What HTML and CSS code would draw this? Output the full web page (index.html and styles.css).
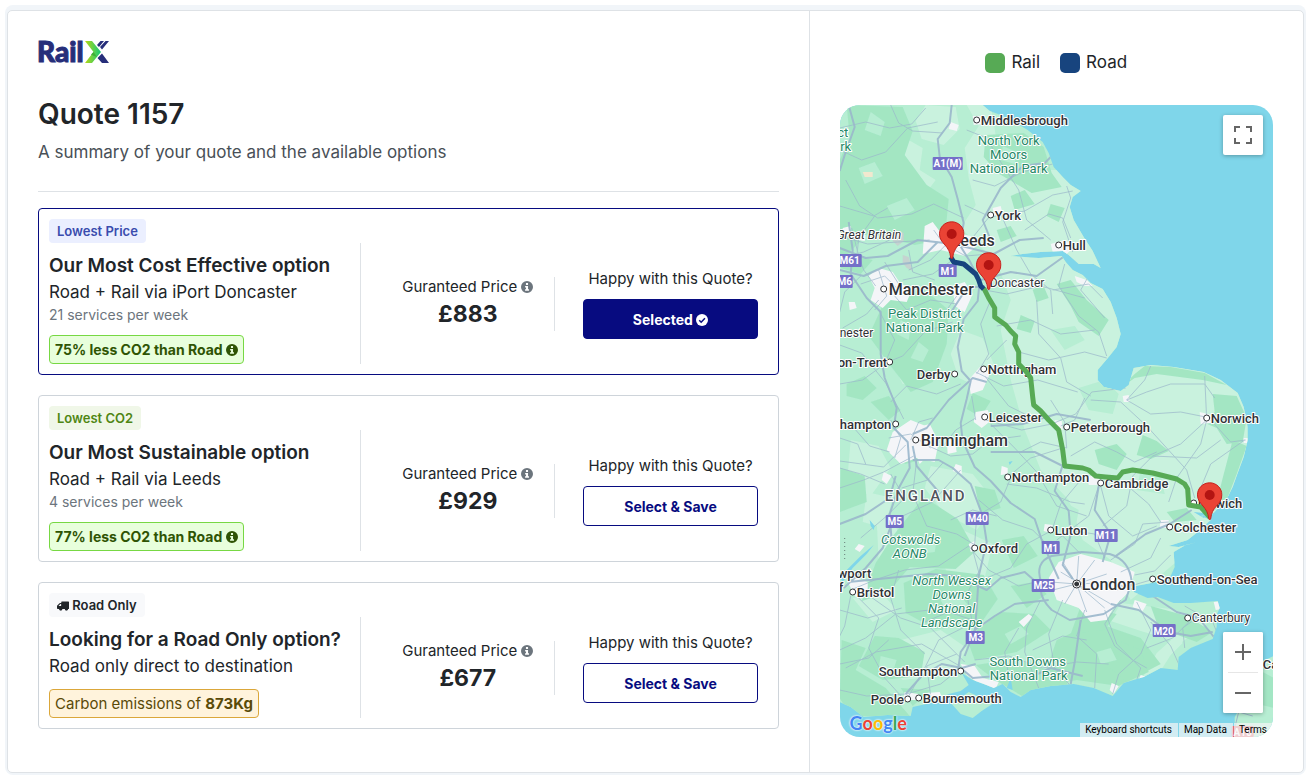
FILE: index.html
```html
<!DOCTYPE html>
<html lang="en">

<head>
    <meta charset="UTF-8">
    <meta name="viewport" content="width=device-width, initial-scale=1.0">
    <title>RailX - Quote 1157</title>
    <link rel="stylesheet" href="styles.css">
</head>

<body>
    <!-- shared icons -->
    <svg class="sprite" aria-hidden="true">
        <symbol id="info" viewBox="0 0 16 16">
            <path fill="currentColor" fill-rule="evenodd" d="M8 0a8 8 0 1 0 0 16A8 8 0 0 0 8 0zM6.6 2.7h2.8v2.6H6.6zM5.5 6.5h3.9v4.6h1.3v2H5.4v-2h1.3V8.5H5.5z" />
        </symbol>
        <symbol id="check" viewBox="0 0 16 16">
            <circle cx="8" cy="8" r="8" fill="#fff" />
            <path d="M4.3 8.3l2.6 2.6 5-5.2" fill="none" stroke="#070b80" stroke-width="2" />
        </symbol>
        <symbol id="truck" viewBox="0 0 16 14">
            <path fill="currentColor" fill-rule="evenodd" d="M6.5 1h8.7q.8 0 .8.8v8.4q0 .8-.8.8h-.5a2.2 2.2 0 0 1-4.3 0H7.2a2.2 2.2 0 0 1-4.3 0H1q-1 0-1-1V6.8l3-3.3q.4-.5 1-.5h1.7V1.800q0-.8.8-.8zM4.400 4.300L2 7h3.500V4.300z" />
            <circle cx="5" cy="11" r="2" fill="currentColor" />
            <circle cx="12.500" cy="11" r="2" fill="currentColor" />
        </symbol>
        <symbol id="pin" viewBox="0 0 26 38">
            <path d="M13 .8C6.200.8.8 6.200.8 12.800c0 5 2.500 7.800 5.500 11.200 3 3.500 5.200 7 5.600 12.200 0 .9.400 1.300 1.100 1.300s1.100-.4 1.100-1.300c.4-5.200 2.600-8.700 5.600-12.200 3-3.400 5.500-6.200 5.500-11.200C25.200 6.200 19.800.8 13 .8z" fill="#ea4335" stroke="#c5221f" />
            <circle cx="13" cy="13" r="5" fill="#b31412" />
        </symbol>
    </svg>

    <div class="outer">
        <div class="panel">
            <main class="quotes">
                <a href="#" class="logo" aria-label="RailX">
                    <svg width="72" height="24" viewBox="0 0 72 24">
                        <defs>
                            <linearGradient id="green" x1="0" x2="1">
                                <stop offset="0" stop-color="#b5d916" />
                                <stop offset="1" stop-color="#12c97b" />
                            </linearGradient>
                        </defs>
                        <text class="logoText" x="-1" y="22">Rail</text>
                        <path fill="url(#green)" d="M47 1h7l9 11-9 11h-7l8.500-11z" />
                        <path fill="#3fae38" d="M55.500 12l3.500 5-4-1.500-2-1z" />
                        <path fill="#262e7a" d="M62.500 1H66l-5 6-2-2zM67.500 1H71l-7 8.500-2-2.500zM64 13.500L71 23h-7l-4.500-5z" />
                    </svg>
                </a>
                <h1>Quote 1157</h1>
                <p class="summary">A summary of your quote and the available options</p>

                <section class="option selected">
                    <span class="badge price">Lowest Price</span>
                    <div class="optionRow">
                        <div class="details">
                            <h2>Our Most Cost Effective option</h2>
                            <p class="route">Road + Rail via iPort Doncaster</p>
                            <p class="services">21 services per week</p>
                            <span class="tag saving">75% less CO2 than Road <svg class="icon"><use href="#info" /></svg></span>
                        </div>
                        <div class="cost">
                            <p class="costLabel">Guranteed Price <svg class="icon"><use href="#info" /></svg></p>
                            <p class="amount">£883</p>
                        </div>
                        <div class="choose">
                            <p>Happy with this Quote?</p>
                            <button type="button">Selected <svg class="icon"><use href="#check" /></svg></button>
                        </div>
                    </div>
                </section>

                <section class="option">
                    <span class="badge co2">Lowest CO2</span>
                    <div class="optionRow">
                        <div class="details">
                            <h2>Our Most Sustainable option</h2>
                            <p class="route">Road + Rail via Leeds</p>
                            <p class="services">4 services per week</p>
                            <span class="tag saving">77% less CO2 than Road <svg class="icon"><use href="#info" /></svg></span>
                        </div>
                        <div class="cost">
                            <p class="costLabel">Guranteed Price <svg class="icon"><use href="#info" /></svg></p>
                            <p class="amount">£929</p>
                        </div>
                        <div class="choose">
                            <p>Happy with this Quote?</p>
                            <button type="button">Select &amp; Save</button>
                        </div>
                    </div>
                </section>

                <section class="option">
                    <span class="badge road"><svg class="icon"><use href="#truck" /></svg> Road Only</span>
                    <div class="optionRow">
                        <div class="details">
                            <h2>Looking for a Road Only option?</h2>
                            <p class="route">Road only direct to destination</p>
                            <span class="tag emissions">Carbon emissions of <b>873Kg</b></span>
                        </div>
                        <div class="cost">
                            <p class="costLabel">Guranteed Price <svg class="icon"><use href="#info" /></svg></p>
                            <p class="amount">£677</p>
                        </div>
                        <div class="choose">
                            <p>Happy with this Quote?</p>
                            <button type="button">Select &amp; Save</button>
                        </div>
                    </div>
                </section>
            </main>

            <aside class="mapSide">
                <ul class="legend">
                    <li><span class="swatch rail"></span>Rail</li>
                    <li><span class="swatch road"></span>Road</li>
                </ul>
                <div class="map">
                    <svg class="mapCanvas" viewBox="839 105 434 632" preserveAspectRatio="xMidYMid slice" role="img" aria-label="Map of the route">
                        <!-- land -->
                        <g fill="#b7eed3">
                            <path id="land" d="M839 105H982L989 111 1000 115 1012 121 1027 130 1042 142 1048 153 1053 167 1062 177 1070 185 1080 191 1072 197 1069 207 1073 220 1083 237 1092 251 1100 268 1093 264 1078 264 1068 255 1062 251 1040 252 1022 254 1010 256 1024 257 1038 258 1061 256 1065 262 1072 270 1082 275 1090 283 1102 289 1110 302 1116 318 1120 334 1116 347 1108 357 1097 370 1097 380 1103 387 1120 391 1128 385 1133 368 1150 365 1173 367 1203 372 1220 380 1237 393 1243 407 1247 427 1247 440 1243 457 1237 473 1232 487 1227 497 1213 513 1200 516 1210 520 1197 532 1187 540 1168 546 1178 547 1197 542 1185 545 1173 552 1174 567 1170 576 1156 582 1135 586 1133 592 1147 598 1157 597 1173 603 1190 603 1217 601 1219 608 1216 615 1216 627 1212 639 1190 648 1178 657 1177 670 1160 668 1143 677 1123 683 1112 696 1093 688 1073 684 1050 686 1030 690 1020 697 1010 692 1002 684 993 688 983 684 972 680 961 673 968 685 960 691 948 694 930 703 912 707 910 716 887 715 863 717 850 707 839 702z" />
                            <path d="M951 704L968 692 985 700 993 703 981 711 972 718 960 714z" />
                            <path d="M1273 656L1258 663 1250 690 1234 717 1234 737H1273z" />
                        </g>
                        <clipPath id="landClip"><use href="#land" /></clipPath>

                        <g clip-path="url(#landClip)">
                            <!-- lowlands -->
                            <g fill="#c9f2de">
                                <path d="M966 105L978 126 964 148 968 178 975 205 960 228 996 262 1010 300 1000 330 1010 380 1024 430 1040 470 1068 500 1082 540 1110 560 1130 600 1250 500 1260 380 1120 330 1120 240 1070 170 1040 170 1000 165 990 105z" />
                                <path d="M925 105l30 2 4 22-16 16-22-6-6-18zM908 140l14 8-3 22 16 10-12 16-13-14-8-22zM960 330l22 8 12 28-14 22-22-10-8-24zM912 344l24 10-4 26-30 4-10-20zM850 440l28 6 12 22-20 28-24-10zM930 466l42 8 24 30-20 26-32-16-20-26zM866 492l26 6-8 30-22-6zM962 530l30 14-8 34-34 4-12-30zM900 640l40-10 26 18-12 26-52 6-24-20zM1120 603l50 6 40 12-30 22-40-12-30-10zM876 520l20 8 4 28-22 6zM852 598l30-4 14 16-24 12z" />
                                <path d="M1170 655l12-12-6-8-20 18-16 28 16-4z" />
                            </g>
                            <!-- forests, hills and parks -->
                            <g fill="#a3e6c4">
                                <path d="M846 105l56 2 10 24-8 24 22 30 22 14-4 40-30 6-46-12-24 24H839V160l10-22z" />
                                <path d="M985 135l38-2 20 14 8 26 10 14-30 6-34-20-14-16z" />
                                <path d="M888 292l36-2 24 20-2 34-14 38-22 10-20-26-22-30z" />
                                <path d="M893 535l30-38 34 22 18 32-20 18-46-2-22 26-26 8 14-38z" />
                                <path d="M903 583l32-14 48 6 14 24-18 26-44 4-30-16z" />
                                <path d="M1000 612l34 2 16 16-34 22-42 8-8-22z" />
                                <path d="M1056 640l38-18 46 16 20 26-42 22-42-6-36 6z" />
                                <path d="M975 665l40-6 50 18 4 16-46 4-30-18z" />
                                <path d="M874 636l24 2 26 14-4 24-38 4-24-14z" />
                                <path d="M840 468l24 8 2 26-27 10zM841 640l24 8-10 22 30 18 24 28H850l-11-18zM900 688l30 2-18 16zM870 402l18-6 12 14-12 10zM972 393l18 8-10 16-14-8zM846 384l18-8 12 12-14 12-16-4zM900 448l22-4 6 14-24 6zM974 486l20 4 6 18-20 6zM1001 540l22-4 14 20-24 12zM1010 586l24-4 12 12-20 14zM1080 606l36 8-12 16-34 4zM848 254l24 6-12 14-20-6z" />
                                <path d="M1120 388l14-14 10-8 26 1 34 6 22 12-24-5-46-6-22 4zM1212 394l24 2 10 22-4 24-16 2-10-16-14-6 12-10zM1142 435l14 6 12 10-18 8-14-4zM1056 284l14-4 16 20 22 20-10 16-20-14-8-16zM1094 450l22-6 10 10-10 16-18-6zM1166 512l20-4 10 12-22 2zM1232 440l14 6-10 28-10 26-12 10 8-32z" />
                                <path d="M1032 290l10-6 6 14-12 4zM1020 315l14 6-4 12-14-4zM1010 196l14-6 10 14-20 6zM1050 204l14 4-6 14-12-6zM996 230l14-4 6 10-16 6z" />
                                <path d="M1100 660l16-20 24 10 8 22-22 10z" />
                                <path d="M1150 606l36 10 26 16-16 10-38-14z" />
                            </g>
                            <g fill="#b7eed3">
                                <path d="M870 112l14 10-4 14-16-6zM858 168l16-6 8 14-18 8zM886 206l20-8 8 12-20 10zM1002 146l14 6-2 12-14-4zM900 320l10 6-2 14-12-6zM918 342l10 8-6 12-12-4zM920 536l16 4-2 12-16 2zM940 600l20-4 8 10-22 6zM1096 652l14-4 6 12-16 4zM880 656l16 4-4 12-14-4zM1004 634l16-8 8 8-18 10z" />
                                <path d="M1104 380l14 14-6 20-24-4-10-22zM1050 330l24-4 10 14-20 10zM1140 470l20 4 4 20-28-4zM1060 500l18 10-4 22-20-10z" />
                            </g>
                            <!-- towns -->
                            <g fill="#f4f6f8">
                                <path d="M868 276l10-8 14 4 8 12 12 4-6 14-16-2-8 8-12-8 4-12zM924 226l8-4 6 8 14 2 18 4 4 12-10 8-24-6-18 4zM952 286l12-4 8 12-8 18-10-6zM892 432l18-12 20 8 8 14-4 20-18-4-16 6-14-14zM946 440l8 0 2 12-9 2zM848 302l6 0 2 6-7 2zM905 430l24-6 10 20-20 20z" />
                                <path d="M1048 578l10-16 22-8 30 8 24 10-6 20-14 14-8 14-16 2-12-14-22-8z" />
                                <path d="M1050 244l14-4 10 6-8 8-14-2zM972 116l8 0 1 8-8 1zM950 122l8 3-2 6-8-2zM992 208l8-2 2 8-9 2zM968 380l12-14 10 6-8 18-12 4zM975 412l12-2 4 10-10 8-8-6zM1001 466l6 2 0 6-7 1zM1122 396l6-1 1 7-6 0zM1199 412l12 3 0 8-11 1zM1054 420l7 1 1 9-7-1zM1086 476l12 0 2 9-12 0zM1044 524l8 1-2 8-7-2zM968 544l6-3 3 9-7 2zM847 582l8-4 12 4 0 12-12 3zM960 664l14 2 8 12 16 4-4 9-14-6-14-10zM904 692l14 2-2 6-14 0zM926 693l13-1 2 5-14 2zM1134 600l12 4-4 7-10-4zM1111 683l7 3-5 8-4-4zM1213 602l8-1 0 8-6 1zM1140 675l6 2-8 3zM1074 276l12 4 6 6-8 0-8-4zM1160 520l8 0 0 8-9 0zM1018 622l10-8 4 3-9 10zM858 544l6 2-5 6-5-3zM883 472l8 4-5 8-5-4zM955 464l6 2 0 8-9-3zM1243 438l6 0 0 5-6 0zM929 232l5-6 4 14-7 6zM842 228l8-2 0 10-8 0zM858 232l7 3-1 6-8-1z" />
                            </g>
                            <path fill="#c5d3d0" d="M894 230l9 3 0 8-6 5-5-5zM902 255l6 2 4 14-6-3-4-5z" />
                            <path fill="#f2e8cf" d="M862 172l10 0 0 5-8 0z" />

                            <!-- minor roads -->
                            <g class="minor">
                                <path d="M839 150l22 10 24-8 22-24 30-6M839 128l26-6 24 6 22-4 14-16M845 180l14 26 18 12 34-4 22-10 30 14M839 206l34 10 14-8M874 216l-16 22-2 20M890 105l8 18 14 8 30 2" />
                                <path d="M966 130l20 8 14 24 18 28 8 30 24 20M972 180l22 6 28-14 30-8M964 205l26 12 34-6 28-16 20-4M1000 214l16 36 14 24 20 16 2 24M990 215l-24 30M1024 230l24-16 14 4 8 20M1066 186l4 12-8 24 10 30" />
                                <path d="M839 236l28 8 30-2 32-2M839 258l24-6 26-12M851 228l6 24 6 18 12 16M884 262l14 22M860 276l-16 16-5 20M878 300l-12 14-24 14M894 296l12 14 24-10 26 4M878 310l16 30-10 24-22 16-23 4M902 280l30-6 20-14M946 310l10-14M952 322l-28 10-22 24-20 8M839 345l22 8 24 30 18 36M908 250l4 22 22 8" />
                                <path d="M984 290l22 4 34-8 44 12M990 300l-10 24 8 30-12 20M996 326l34-6 30 14 34-4M1006 340l-20 20M1018 352l30 8 36-8 22 6M1036 300l2 34 22 24 6 24 24 14M1064 264l-6 22 20 30 20 16 8 24M1052 290l36-6 14 14M1088 276l-8 14 24 28" />
                                <path d="M975 372l28 14 34-6 40 12M984 376l24 30 20 10M960 384l-24 10-30-8-16 16M975 418l-20 12-14 18M985 420l36 10 30-6 24-10 16-22 34-4M990 424l24 24 22 24 20 34 30 10M975 420l-4-24M905 445l-22 22-44-6M916 460l-4 34 14 32 30 8 20 12M928 446l22 10 22-2 18-14 30-4M839 488l24-8 20-8 30-16M890 474l14 24-18 18-26 22M884 484l-24-10-21-6M855 430l14 16 20 6M839 438l18 6 8 20M943 462l-16 18-26 8M960 470l-28 32-30 14" />
                                <path d="M1006 478l24-20 32-10M1010 478l-10 24-24 14-2 28M1006 484l30 4 34 14 14 2M1020 452l20-10 26 6M1050 400l14 22 2 26M1084 398l-10 22-14 6M1090 400l30 2 26 24 20 22 20 22 8 28M1126 400l24 14 30-2 30 6M1126 400l20-8 24-8 34 0 10 14M1206 420l-26 24-28 12-20 20M1206 420l-6 24-24 34-8 24M1210 420l20 22 15-2M1244 440l-34 24-10 24M1150 366l-6 14-18 20M1206 420l-2-44M1152 456l44 2 24-18M1070 456l24-14 22 10 18 10 22-10M1080 480l-20 24-8 24M1100 486l8 30 24 20 24-10M1098 486l-10 30-32 24M1120 480l28 24 12 18M1132 476l-6 30-24 20" />
                                <path d="M968 546l-30 20-34 4-30 10-24 10M968 546l20 24 30 16 26-6M972 550l6 22-12 22 6 30M978 500l24 20 30 10 24 24M950 520l22-10 24 6M1052 530l-26 14-16 24-34 14M1060 534l20 20M1066 530l28 4 10 24M1110 560l24-16 8-20 26-2M1134 575l20-4 16-16M1120 572l30-14 10-20M1116 590l34-10" />
                                <path d="M850 596l-6 30-5 10M858 598l20 20-10 30 16 30 20 22M866 594l34 24 30 10 34 34M839 650l26-12 30-24 34-4M845 668l30-16 46-8 38 22M839 610l28 8 34-10M898 570l-8 28 10 32 24 24M888 640l-20 18-29 6M908 696l16-28 14-28 28-14M930 696l-4-30 30-12M960 668l-20 16-34 10-40 2-27-6M972 620l-24-8-24 10M974 660l34-4 34 12 34-6 32 2M1010 688l-6-36 14-24M1040 600l-14 28-2 24 14 36M1062 600l-14 34 6 34 16 18M1084 610l-8 26 20 18-2 34M1104 610l12 34 24 24-4 12M1120 600l-16 24 10 22 18 14 14 8M1136 602l14 28-10 24-22 20-6 20M1086 640l-24-4-30 14M1150 622l20 24 8 18M1192 618l-20 20-26 10M1184 606l28 16 4 10M1196 618l-14 10 2 20" />
                                <path d="M1060 572l20 12 28-2 20 6M1052 590l24-6 18-24M1078 556l-2 28 10 28M1064 604l12-20 28 24M1050 582l26 2 34 20M1062 562l14 22 30-10" />
                                <path d="M890 420l10 18-6 20M888 438l22-4 20 14M910 440l8-18 14-4M860 284l24-8 18 18M878 270l8 26-12 14M950 240l-20 20-22 10M933 230l10 14 22 12 24-2" />
                            </g>
                            <!-- motorways -->
                            <g class="major">
                                <path d="M951 105l-2 18-12 16 2 18 12 20 6 22 6 24-4 22 10 16 10 20-2 20-14 18-6 28 4 24 9 10-4 18-6 24 2 18 12 26 16 14 20 22 24 16 8 24 16 36" />
                                <path d="M848 105l6 22-10 28-5 16M839 248l26 10 22-2 30-16 36 4 40 10 26-14 24-2M848 222l4 28-2 24 16 24 14 14 0 42 4 24 12 30-3 20 14 14 2 26-12 22-8 24 2 28M912 434l14-6 22-28 24-22 14 4M912 460l26 0 14 8 18 16 12 32 4 26-8 34-2 32-2 24-14 20-3 20" />
                                <path d="M990 240l-8-20 18-32 22-22 22-3 8-8M980 280l30-8 26 4 28-20M984 286l-18 2-18 28M839 270l24 6 22-10 32-4 20-20M1062 465l-8 26 14 20 2 24-8 30 10 14" />
                                <path d="M1098 486l-4 24 16 24-8 28M990 426l32-2 34-10 34 6M990 452l44 0 28 14M839 524l26-10 24-16 6-22M894 516l-12 32-17 20-22 20M848 582l20-2 60-6 28 2 30 14 14-12 24-6 16 14M912 446l4 20 22 26" />
                                <path d="M1041 584q-8-22 10-28l30-4 28 2q20 6 22 28l-6 18-22 14-34 6-18-10q-14-14-10-26zM1110 604l28 6 30 22 22 4 22-4M1128 588l24 8 24 16 22 6 16 20M1080 620l-6 42-4 22M1048 600l-34 4-20 12-20 14-10 26M1115 556l30-22 24-10 22-14" />
                                <path d="M960 668l12 10 24-2 28 4 26-12 32 8M975 664l-14 4-20-4-20 12-16 18" />
                            </g>
                            <path class="water" d="M839 577L860 556 873 545 866 554 852 568 842 582zM869 520l5 6-1 4-3-4zM1008 462l4-1-3 4zM1026 257l10-2 16 0-14 3zM1135 588l20-4-10 6zM1193 512l20 2-10 4zM1006 688l4-10 2 12z" />
                            <path d="M844 538v22" stroke="#657d77" stroke-dasharray="1 3" />
                        </g>
                        <path d="M1256 680q8 12 17 16M1252 716l-14-4-4 16M1240 705l16-10" fill="none" stroke="#9bb7cb" />
                        <path fill="#a3e6c4" d="M1262 672l11 6v30l-16-4z" />

                        <!-- road shields -->
                        <g class="shields">
                            <rect x="932" y="157" width="30" height="13" rx="1" /><text x="947" y="167">A1(M)</text>
                            <rect x="837" y="254" width="24" height="13" rx="1" /><text x="849" y="264">M61</text>
                            <rect x="834" y="275" width="18" height="13" rx="1" /><text x="844" y="285">M6</text>
                            <rect x="938" y="264" width="18" height="13" rx="1" /><text x="947" y="275">M1</text>
                            <rect x="885" y="515" width="18" height="13" rx="1" /><text x="894" y="525">M5</text>
                            <rect x="965" y="512" width="23" height="13" rx="1" /><text x="977" y="522">M40</text>
                            <rect x="1041" y="541" width="18" height="13" rx="1" /><text x="1050" y="552">M1</text>
                            <rect x="1094" y="529" width="23" height="13" rx="1" /><text x="1105" y="539">M11</text>
                            <rect x="1031" y="579" width="23" height="13" rx="1" /><text x="1043" y="589">M25</text>
                            <rect x="1152" y="624" width="23" height="13" rx="1" /><text x="1163" y="635">M20</text>
                            <rect x="965" y="631" width="19" height="13" rx="1" /><text x="975" y="641">M3</text>
                            <rect class="aRoad" x="1231" y="726" width="22" height="11" rx="1" /><text x="1242" y="736">A16</text>
                        </g>

                        <!-- place names -->
                        <g class="parks">
                            <text x="1008" y="145">North York</text>
                            <text x="1008" y="159">Moors</text>
                            <text x="1008" y="173">National Park</text>
                            <text x="924" y="318">Peak District</text>
                            <text x="924" y="332">National Park</text>
                            <text x="1027" y="666">South Downs</text>
                            <text x="1028" y="680">National Park</text>
                            <text x="842" y="137">ct</text>
                            <text x="845" y="151">rk</text>
                        </g>
                        <g class="parks italic">
                            <text x="910" y="544">Cotswolds</text>
                            <text x="909" y="558">AONB</text>
                            <text x="951" y="585">North Wessex</text>
                            <text x="951" y="599">Downs</text>
                            <text x="951" y="613">National</text>
                            <text x="951" y="627">Landscape</text>
                        </g>
                        <g class="towns">
                            <circle cx="976" cy="120" r="3" /><text x="980" y="125">Middlesbrough</text>
                            <circle cx="990" cy="215" r="3" /><text x="994" y="220">York</text>
                            <circle cx="1058" cy="245" r="3" /><text x="1062" y="250">Hull</text>
                            <circle cx="983" cy="369" r="3" /><text x="987" y="374">Nottingham</text>
                            <circle cx="954" cy="374" r="3" /><text x="916" y="379">Derby</text>
                            <circle cx="889" cy="362" r="3" /><text x="837" y="367">on-Trent</text>
                            <circle cx="895" cy="424" r="3" /><text x="839" y="429">hampton</text>
                            <circle cx="984" cy="417" r="3" /><text x="988" y="422">Leicester</text>
                            <circle cx="1066" cy="427" r="3" /><text x="1070" y="432">Peterborough</text>
                            <circle cx="1206" cy="418" r="3" /><text x="1210" y="423">Norwich</text>
                            <circle cx="1007" cy="477" r="3" /><text x="1011" y="482">Northampton</text>
                            <circle cx="1100" cy="483" r="3" /><text x="1104" y="488">Cambridge</text>
                            <circle cx="1193" cy="503" r="3" /><text x="1197" y="508">Ipswich</text>
                            <circle cx="1169" cy="527" r="3" /><text x="1173" y="532">Colchester</text>
                            <circle cx="1050" cy="530" r="3" /><text x="1054" y="535">Luton</text>
                            <circle cx="974" cy="548" r="3" /><text x="978" y="553">Oxford</text>
                            <circle cx="852" cy="592" r="3" /><text x="856" y="597">Bristol</text>
                            <circle cx="1152" cy="579" r="3" /><text x="1156" y="584">Southend-on-Sea</text>
                            <circle cx="960" cy="671" r="3" /><text x="878" y="676">Southampton</text>
                            <circle cx="907" cy="699" r="3" /><text x="870" y="704">Poole</text>
                            <circle cx="918" cy="698" r="3" /><text x="922" y="703">Bournemouth</text>
                            <text x="837" y="578">wport</text>
                            <text x="838" y="592">f</text>
                            <text x="1262" y="669">Calais</text>
                        </g>
                        <g class="towns small">
                            <text x="989" y="287">Doncaster</text>
                            <text x="839" y="337">nester</text>
                            <circle cx="1187" cy="618" r="3" /><text x="1191" y="622">Canterbury</text>
                            <text class="italic" x="836" y="239">Great Britain</text>
                        </g>
                        <g class="towns big">
                            <circle cx="883" cy="289" r="3" /><text x="888" y="295">Manchester</text>
                            <circle cx="915" cy="440" r="3" /><text x="920" y="446">Birmingham</text>
                            <text x="951" y="246">Leeds</text>
                            <circle cx="1076" cy="584" r="4" /><circle class="capital" cx="1076" cy="584" r="2" /><text x="1081" y="590">London</text>
                        </g>
                        <text class="country" x="884" y="501">ENGLAND</text>

                        <!-- route -->
                        <path class="routeLine rail" d="M983 288l5 10 6 10v9l4 3 7 5 5 6 5 5-1 8 4 8v12l7 7 5 7 2 19 1 8 7 6 8 9 3 3 7 7 4 20 2 16 18 2 6 2 7 6 10 1 12 1 5-6 10-2 20 3 24 6 8 5 3 5 1 16 12 2 9 10" />
                        <path class="routeLine road" d="M950 257l3 5 10 2 6 5 6 5 3 6 2 6 3 3" />
                        <use href="#pin" x="938" y="221" width="26" height="38" />
                        <use href="#pin" x="975" y="252" width="26" height="38" />
                        <use href="#pin" x="1196" y="482" width="26" height="38" />
                    </svg>

                    <button type="button" class="mapButton fullscreen" aria-label="Toggle fullscreen view">
                        <svg width="18" height="18" viewBox="0 0 18 18">
                            <path d="M1 6V1h5M12 1h5v5M17 12v5h-5M6 17H1v-5" />
                        </svg>
                    </button>
                    <div class="zoom">
                        <button type="button" class="mapButton" aria-label="Zoom in">
                            <svg width="18" height="18" viewBox="0 0 18 18"><path d="M9 1v16M1 9h16" /></svg>
                        </button>
                        <button type="button" class="mapButton" aria-label="Zoom out">
                            <svg width="18" height="18" viewBox="0 0 18 18"><path d="M1 9h16" /></svg>
                        </button>
                    </div>
                    <a href="#" class="google"><span class="blue">G</span><span class="red">o</span><span class="yellow">o</span><span class="blue">g</span><span class="green">l</span><span class="red">e</span></a>
                    <div class="credits">
                        <button type="button">Keyboard shortcuts</button>
                        <a href="#">Map Data</a>
                        <a href="#">Terms</a>
                    </div>
                </div>
            </aside>
        </div>
    </div>
</body>

</html>
```
FILE: styles.css
```css
* {
    box-sizing: border-box;
}

body {
    margin: 0;
    padding: 5px;
    background-color: #fff;
    color: #212529;
    font-family: Inter, "Liberation Sans", sans-serif;
    font-size: 17px;
}

h1,
h2,
p,
ul {
    margin: 0;
    padding: 0;
}

button {
    font-family: inherit;
    cursor: pointer;
}

.sprite {
    position: absolute;
    width: 0;
    height: 0;
}

.icon {
    width: 12px;
    height: 12px;
    vertical-align: -1px;
}

.outer {
    padding: 5px 2px 2px;
    background-color: #f1f5f9;
    border-radius: 8px;
}

.panel {
    display: flex;
    min-height: calc(100vh - 17px);
    background-color: #fff;
    border: 1px solid #dee2e6;
    border-radius: 5px;
}

/* left side */
.quotes {
    flex: 1;
    padding: 29px 30px 20px;
    border-right: 1px solid #dee2e6;
}

.logo {
    display: block;
    height: 24px;
}

.logo>svg {
    display: block;
    overflow: visible;
}

.logoText {
    font-family: Lato, sans-serif;
    font-size: 28px;
    font-weight: 900;
    fill: #262e7a;
    stroke: #262e7a;
    stroke-width: 1px;
}

h1 {
    margin-top: 32px;
    font-size: 28px;
    font-weight: 600;
    line-height: 36px;
}

.summary {
    margin: 8px 0 16px;
    padding-bottom: 27px;
    border-bottom: 1px solid #dee2e6;
    color: #495057;
    line-height: 24px;
}

.option {
    margin-bottom: 20px;
    padding: 10px;
    border: 1px solid #ced4da;
    border-radius: 4px;
}

.option.selected {
    border-color: #070b80;
}

.badge {
    display: table;
    padding: 0 8px;
    border-radius: 4px;
    font-size: 13px;
    font-weight: 600;
    line-height: 24px;
}

.badge.price {
    background-color: #ebefff;
    color: #3a4cae;
}

.badge.co2 {
    background-color: #f0f7e8;
    color: #4f8613;
}

.badge.road {
    background-color: #f8f9fb;
}

.badge>.icon {
    vertical-align: -2px;
}

.optionRow {
    display: grid;
    grid-template-columns: 312fr 194fr 212fr;
    align-items: center;
}

.details {
    padding-top: 9px;
    border-right: 1px solid #dee2e6;
}

h2 {
    font-size: 19px;
    font-weight: 600;
    line-height: 28px;
    white-space: nowrap;
}

.route {
    line-height: 25px;
}

.services {
    color: #6c757d;
    font-size: 14px;
    line-height: 20px;
}

.tag {
    display: table;
    margin-top: 10px;
    padding: 0 5px;
    border: 1px solid;
    border-radius: 4px;
    line-height: 27px;
}

.tag.saving {
    background-color: #e8ffdc;
    border-color: #77d843;
    color: #2f5404;
    font-size: 14px;
    font-weight: 700;
}

.tag.emissions {
    background-color: #fff3dc;
    border-color: #dba73a;
    color: #5a4a08;
    font-size: 15px;
}

.cost {
    padding-left: 20px;
    border-right: 1px solid #dee2e6;
    text-align: center;
}

.costLabel {
    font-size: 15px;
    line-height: 20px;
    white-space: nowrap;
}

.costLabel>.icon {
    color: #6c757d;
}

.amount {
    font-size: 23px;
    font-weight: 700;
    line-height: 34px;
}

.choose {
    padding: 0 10px 0 28px;
    text-align: center;
}

.choose>p {
    margin-bottom: 10px;
    font-size: 15px;
    line-height: 21px;
    white-space: nowrap;
}

.choose>button {
    width: 100%;
    height: 40px;
    background-color: #fff;
    border: 1px solid #070b80;
    border-radius: 4px;
    color: #070b80;
    font-size: 14px;
    font-weight: 700;
}

.selected .choose>button {
    background-color: #070b80;
    color: #fff;
}

/* right side */
.mapSide {
    display: flex;
    flex-direction: column;
    width: 38.1%;
    padding: 40px 30px 35px;
}

.legend {
    display: flex;
    justify-content: center;
    gap: 20px;
    margin-bottom: 31px;
    line-height: 23px;
    list-style: none;
}

.legend>li {
    display: flex;
    align-items: center;
    gap: 6px;
}

.swatch {
    width: 20px;
    height: 20px;
    border-radius: 5px;
}

.swatch.rail {
    background-color: #57aa55;
}

.swatch.road {
    background-color: #17447e;
}

.map {
    position: relative;
    flex: 1;
    min-height: 400px;
    overflow: hidden;
    background-color: #7fd6ea;
    border-radius: 20px;
    font-family: Roboto, sans-serif;
}

.mapCanvas {
    position: absolute;
    width: 100%;
    height: 100%;
}

.minor,
.major {
    fill: none;
    stroke: #9bb7cb;
    stroke-linejoin: round;
}

.minor {
    stroke-width: 1px;
    opacity: .7;
}

.major {
    stroke-width: 2px;
    opacity: .9;
}

.water {
    fill: #7fd6ea;
}

.shields {
    fill: #7470c8;
    font-size: 10px;
    font-weight: 700;
    text-anchor: middle;
}

.shields>.aRoad {
    fill: #e06c75;
}

.shields>text {
    fill: #fff;
}

.parks,
.towns,
.country {
    paint-order: stroke;
    stroke: #fff;
    stroke-width: 2px;
    stroke-linejoin: round;
}

.parks {
    fill: #258766;
    font-size: 13px;
    text-anchor: middle;
}

.italic {
    font-style: italic;
}

.towns {
    fill: #303236;
    font-size: 13px;
    font-weight: 500;
}

.towns.small {
    font-size: 12px;
    font-weight: 400;
}

.towns.big {
    font-size: 16px;
}

.towns>circle {
    fill: #fff;
    stroke: #303236;
    stroke-width: 1px;
    paint-order: normal;
}

.towns>.capital {
    fill: #303236;
}

.country {
    fill: #51555c;
    font-size: 15px;
    font-weight: 500;
    letter-spacing: 2px;
}

.routeLine {
    fill: none;
    stroke-width: 5px;
    stroke-linejoin: round;
}

.routeLine.rail {
    stroke: #57aa55;
}

.routeLine.road {
    stroke: #17447e;
}

.mapButton {
    display: flex;
    align-items: center;
    justify-content: center;
    width: 40px;
    height: 40px;
    padding: 0;
    background-color: #fff;
    border: 0;
    border-radius: 2px;
}

.mapButton path {
    fill: none;
    stroke: #666;
    stroke-width: 2px;
}

.fullscreen {
    position: absolute;
    top: 10px;
    right: 10px;
    box-shadow: 0 1px 4px rgba(0, 0, 0, .3);
}

.zoom {
    position: absolute;
    right: 10px;
    bottom: 24px;
    background-color: #fff;
    border-radius: 2px;
    box-shadow: 0 1px 4px rgba(0, 0, 0, .3);
}

.zoom::before {
    content: "";
    position: absolute;
    top: 40px;
    left: 5px;
    width: 30px;
    height: 1px;
    background-color: #e6e6e6;
}

.zoom>.mapButton+.mapButton {
    margin-top: 1px;
}

.google {
    position: absolute;
    bottom: 2px;
    left: 10px;
    font-family: Lato, sans-serif;
    font-size: 18px;
    font-weight: 700;
    line-height: 24px;
    text-decoration: none;
    text-shadow: 0 0 2px #fff, 0 0 2px #fff;
}

.blue {
    color: #4285f4;
}

.red {
    color: #ea4335;
}

.yellow {
    color: #fbbc04;
}

.green {
    color: #34a853;
}

.credits {
    position: absolute;
    right: 0;
    bottom: 0;
    display: flex;
    gap: 1px;
}

.credits>* {
    padding: 0 6px 0 5px;
    background-color: rgba(245, 245, 245, .7);
    border: 0;
    color: #000;
    font-family: inherit;
    font-size: 10px;
    line-height: 14px;
    text-decoration: none;
}
```
